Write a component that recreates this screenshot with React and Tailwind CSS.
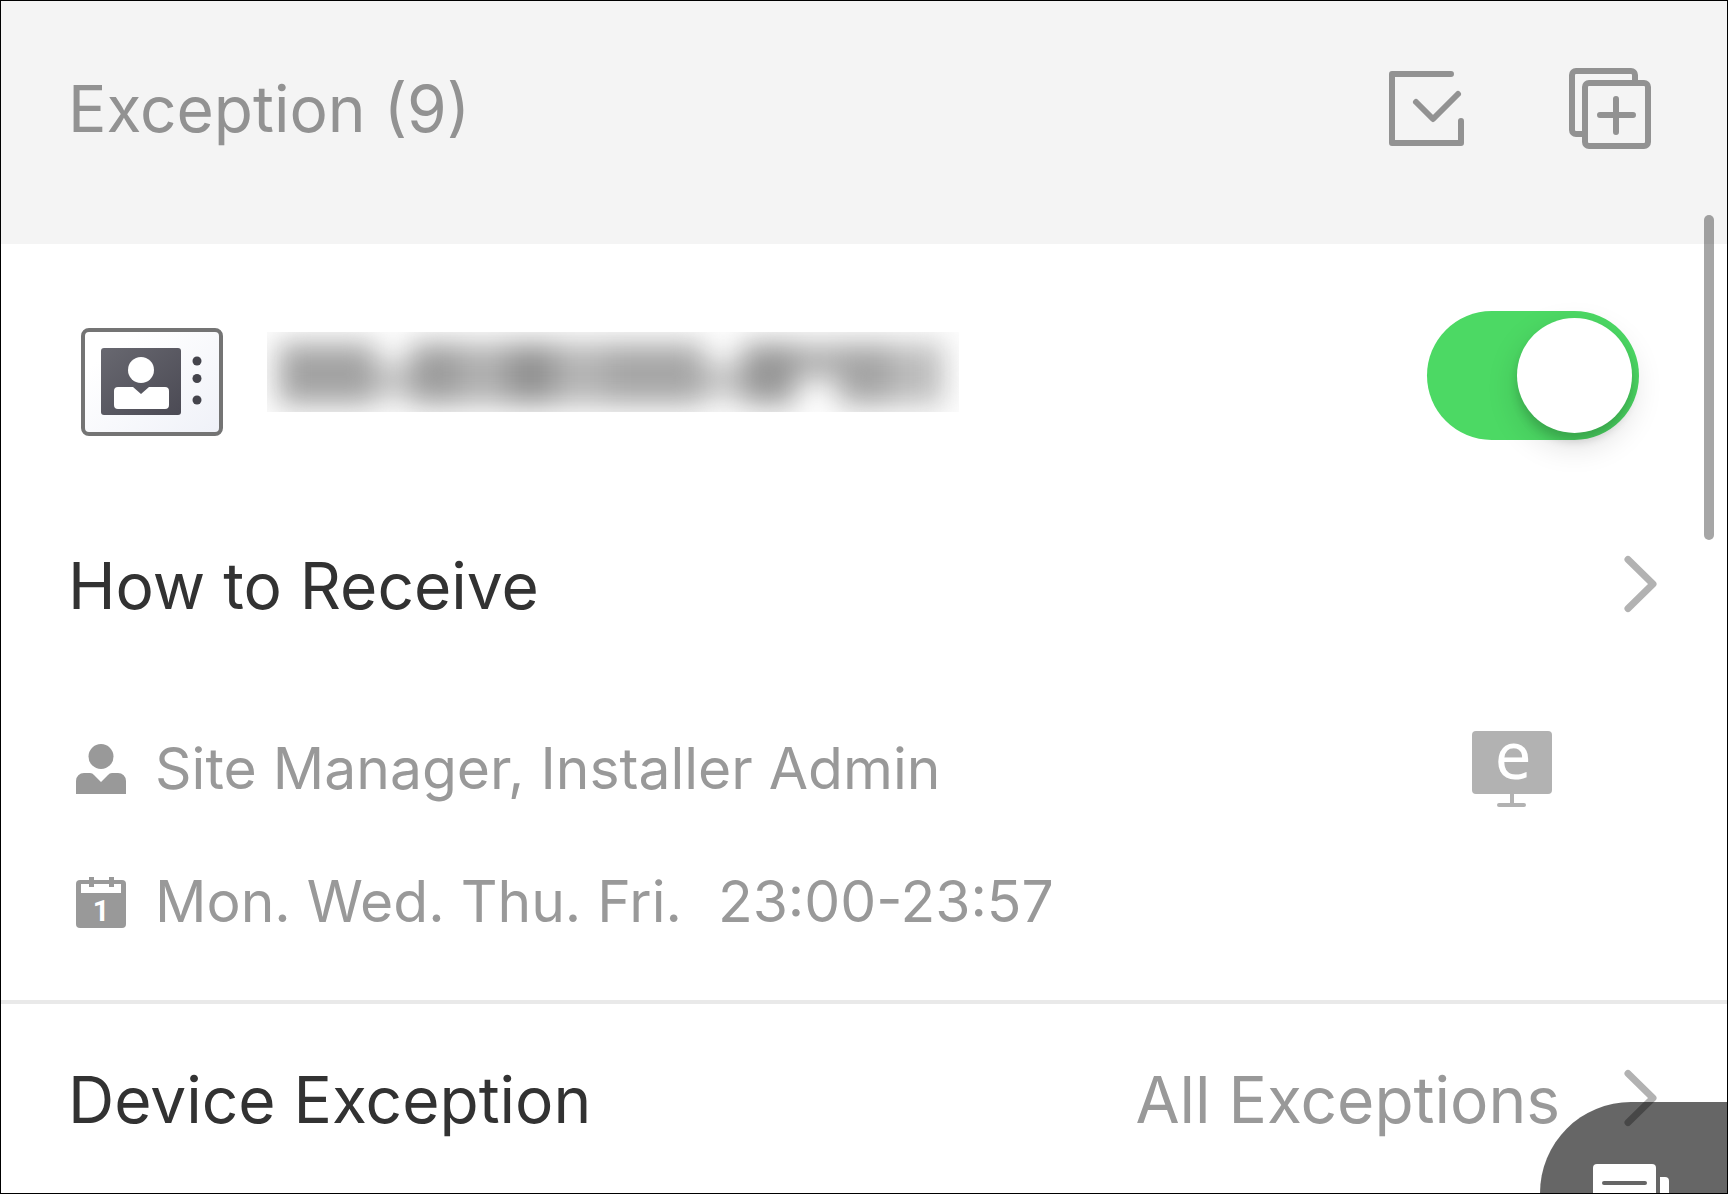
import React from "react";

function SelectIcon() {
  return (
    <svg width="76" height="76" viewBox="0 0 76 76" fill="none" stroke="#929292" strokeWidth="6" strokeLinecap="round" strokeLinejoin="round" aria-hidden="true">
      <path d="M62 3H3V72H72V50" />
      <path d="M27 31L44 48L69 23" />
    </svg>
  );
}

function AddIcon() {
  return (
    <svg width="82" height="82" viewBox="0 0 82 82" fill="none" stroke="#929292" strokeWidth="6" strokeLinejoin="round" aria-hidden="true">
      <path d="M66 14V7a4 4 0 0 0-4-4H7a4 4 0 0 0-4 4v55a4 4 0 0 0 4 4h8" />
      <rect x="16" y="15" width="63" height="63" rx="4" />
      <path d="M31 47h33M47 31v33" strokeLinecap="round" />
    </svg>
  );
}

function StationIcon() {
  return (
    <svg className="mt-3 shrink-0" width="142" height="108" viewBox="0 0 142 108" aria-hidden="true">
      <defs>
        <linearGradient id="case" x1="0" y1="0" x2="1" y2="1">
          <stop offset="0.2" stopColor="#ffffff" />
          <stop offset="1" stopColor="#eff1f8" />
        </linearGradient>
        <linearGradient id="screen" x1="0" y1="0" x2="1" y2="1">
          <stop offset="0" stopColor="#686870" />
          <stop offset="1" stopColor="#4b4a54" />
        </linearGradient>
      </defs>
      <rect x="2" y="2" width="138" height="104" rx="6" fill="url(#case)" stroke="#747474" strokeWidth="4" />
      <rect x="20" y="20" width="80" height="67" rx="3" fill="url(#screen)" />
      <circle cx="60" cy="42" r="13" fill="#fff" />
      <path d="M37 59H52L60 66L68 59H84a4 4 0 0 1 4 4V77a4 4 0 0 1-4 4H37a4 4 0 0 1-4-4V63a4 4 0 0 1 4-4Z" fill="#fff" />
      <g fill="#44444c">
        <circle cx="116" cy="33" r="4.5" />
        <circle cx="116" cy="50.5" r="4.5" />
        <circle cx="116" cy="72" r="4.5" />
      </g>
    </svg>
  );
}

function PersonIcon() {
  return (
    <svg className="shrink-0" width="50" height="50" viewBox="0 0 50 50" fill="#999" aria-hidden="true">
      <circle cx="25" cy="12.5" r="12.5" />
      <path d="M8 29H14Q16.500 29 18 31L25 38L32 31Q33.500 29 36 29H42a8 8 0 0 1 8 8V50H0V37a8 8 0 0 1 8-8Z" />
    </svg>
  );
}

function CalendarIcon() {
  return (
    <svg className="shrink-0" width="50" height="51" viewBox="0 0 50 51" aria-hidden="true">
      <rect x="0" y="3" width="50" height="48" rx="4" fill="#999" />
      <rect x="5" y="7" width="40" height="9" fill="#fff" />
      <path d="M13 0h5v10h-5zM33 0h5v10h-5z" fill="#999" />
      <text x="25" y="44" textAnchor="middle" fontSize="29" fontWeight="700" fontFamily="Roboto, sans-serif" fill="#fff">1</text>
    </svg>
  );
}

function MonitorIcon() {
  return (
    <svg className="shrink-0 overflow-visible" width="80" height="76" viewBox="0 0 80 76" aria-hidden="true">
      <rect width="80" height="63" rx="4" fill="#b2b2b2" />
      <path d="M40 62V74M27 74H52" stroke="#b2b2b2" strokeWidth="4" strokeLinecap="round" />
      <text x="41" y="48" textAnchor="middle" fontSize="65" fontFamily="'Noto Sans', sans-serif" fill="#fff">e</text>
    </svg>
  );
}

function Chevron() {
  return (
    <svg className="mb-1 shrink-0" width="34" height="58" viewBox="0 0 34 58" fill="none" stroke="#b2b2b2" strokeWidth="7" strokeLinecap="round" strokeLinejoin="round" aria-hidden="true">
      <path d="M4 4.500L29 29L4 53.500" />
    </svg>
  );
}

/* Device name, hidden behind a blur */
function MaskedName() {
  return (
    <div role="img" aria-label="Hidden device name" className="mb-2 ml-11 h-20 w-[692px] overflow-hidden bg-[#fdfdfd]">
      <div className="flex h-full items-center pt-1 pr-4 pl-3 blur-[14px]">
        <div className="h-15 w-24 bg-[#a2a2a2]" />
        <div className="mt-3 h-9 w-9 bg-[#c4c4c4]" />
        <div className="flex h-15 grow">
          <div className="w-12 bg-[#9c9c9c]" />
          <div className="w-12 bg-[#b0b0b0]" />
          <div className="w-12 bg-[#929292]" />
          <div className="w-13 bg-[#b4b4b4]" />
          <div className="grow bg-[#a6a6a6]" />
        </div>
        <div className="mt-3 h-9 w-10 bg-[#c4c4c4]" />
        <div className="flex h-15">
          <div className="w-13 bg-[#969696]" />
          <div className="h-9 w-11 bg-[#b0b0b0]" />
          <div className="w-13 bg-[#a4a4a4]" />
          <div className="w-13 bg-[#bcbcbc]" />
        </div>
      </div>
    </div>
  );
}

export default function App() {
  return (
    <main className="relative flex h-screen flex-col overflow-hidden border border-black bg-white font-['Inter',sans-serif] text-[64px] leading-[80px] text-[#323232]">
      <header className="flex shrink-0 items-center justify-between bg-[#f4f4f4] pt-[67px] pr-[76px] pb-[94px] pl-[67px]">
        <h1 className="text-[#929292]">Exception (9)</h1>
        <div className="flex items-center gap-[104px]">
          <button type="button" aria-label="Select exceptions"><SelectIcon /></button>
          <button type="button" aria-label="Add exception"><AddIcon /></button>
        </div>
      </header>

      <section className="shrink-0 border-b-4 border-[#e9e9e9] pt-[67px] pb-[58px]">
        <div className="flex items-center pr-[88px] pl-20">
          <StationIcon />
          <MaskedName />
          <label className="ml-auto flex cursor-pointer">
            <input type="checkbox" role="switch" defaultChecked aria-label="Enable device notifications" className="peer sr-only" />
            <span className="flex h-[129px] w-[212px] items-center rounded-full bg-[#c8c8c8] px-[7px] peer-checked:justify-end peer-checked:bg-[#4cd964]">
              <span className="size-[115px] rounded-full bg-white shadow-[0_12px_32px_rgba(0,0,0,0.14),0_8px_10px_rgba(0,0,0,0.14)]" />
            </span>
          </label>
        </div>

        <button type="button" className="mt-[106px] flex w-full items-center justify-between pr-[69px] pl-[67px] text-left">
          <span>How to Receive</span>
          <Chevron />
        </button>

        <div className="mt-[103px] flex items-center pr-[175px] pl-[75px] text-[57px] text-[#999]">
          <PersonIcon />
          <span className="ml-[29px]">Site Manager, Installer Admin</span>
          <span className="ml-auto"><MonitorIcon /></span>
        </div>

        <div className="mt-[53px] flex items-center pl-[75px] text-[57px] text-[#999]">
          <CalendarIcon />
          <span className="ml-[29px]">Mon. Wed. Thu. Fri.</span>
          <span className="ml-9">23:00-23:57</span>
        </div>
      </section>

      <button type="button" className="flex shrink-0 items-center pt-14 pr-[69px] pl-[67px] text-left">
        <span>Device Exception</span>
        <span className="mr-16 ml-auto text-[#999]">All Exceptions</span>
        <Chevron />
      </button>

      <div className="absolute top-[214px] right-[13px] h-[325px] w-[10px] rounded-full bg-black/35" />

      <button type="button" aria-label="Open log" className="absolute right-0 bottom-0 h-[91px] w-[187px] overflow-hidden rounded-tl-[96px] bg-black/60">
        <svg className="absolute bottom-0 left-[53px]" width="78" height="29" viewBox="0 0 78 29" aria-hidden="true">
          <path d="M0 29V4a4 4 0 0 1 4-4H59a4 4 0 0 1 4 4V29Z" fill="#fff" />
          <path d="M11 19H52" stroke="#666" strokeWidth="4" strokeLinecap="round" />
          <path d="M67 29V13H72a4 4 0 0 1 4 4V29Z" fill="#fff" />
        </svg>
      </button>
    </main>
  );
}
